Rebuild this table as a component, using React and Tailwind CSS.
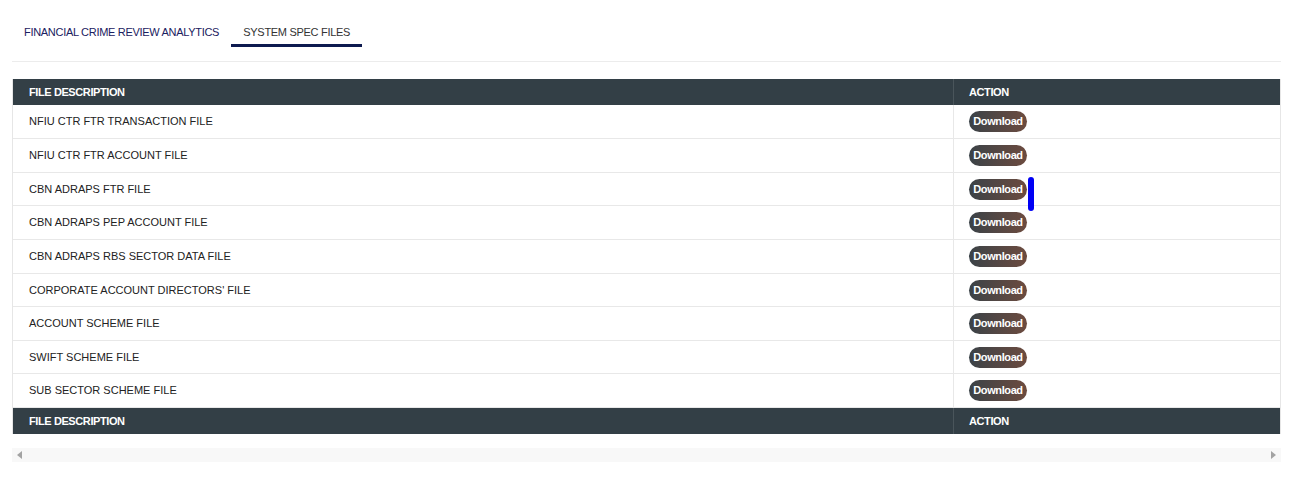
import React from 'react';

const files = [
  'NFIU CTR FTR TRANSACTION FILE',
  'NFIU CTR FTR ACCOUNT FILE',
  'CBN ADRAPS FTR FILE',
  'CBN ADRAPS PEP ACCOUNT FILE',
  'CBN ADRAPS RBS SECTOR DATA FILE',
  "CORPORATE ACCOUNT DIRECTORS' FILE",
  'ACCOUNT SCHEME FILE',
  'SWIFT SCHEME FILE',
  'SUB SECTOR SCHEME FILE',
];

// row heights alternate slightly, as in the rendered table
const rowH = ['h-[34px]', 'h-[34px]', 'h-[33px]', 'h-[34px]', 'h-[34px]', 'h-[33px]', 'h-[34px]', 'h-[33px]', 'h-[34px]'];

const HeaderRow = () => (
  <div className="flex h-[26px] bg-[#333f46] text-white text-[11px] font-bold tracking-[-0.4px]">
    <div className="w-[941px] pl-4 flex items-center border-r border-[#4a555b]">FILE DESCRIPTION</div>
    <div className="flex-1 pl-[15px] flex items-center">ACTION</div>
  </div>
);

export default function App() {
  return (
    <div className="w-[1293px] h-[479px] bg-white px-3 pt-[18px]" style={{ fontFamily: '"Liberation Sans", Arial, sans-serif' }}>
      {/* tabs */}
      <div className="flex border-b border-[#ececec] h-[44px]">
        <div className="px-3 pt-[6px] text-[11px] text-[#1a2060] tracking-[-0.3px]">FINANCIAL CRIME REVIEW ANALYTICS</div>
        <div className="px-3 pt-[6px] text-[11px] text-[#333] tracking-[-0.3px] w-[131px] text-center h-[29px] border-b-[3px] border-[#0d1a4f]">SYSTEM SPEC FILES</div>
      </div>

      {/* table */}
      <div className="mt-[17px] border-x border-[#e6e6e6]">
        <HeaderRow />
        {files.map((name, i) => (
          <div key={name} className={`flex ${rowH[i]} border-b border-[#e8e8e8] text-[11px] text-[#222]`}>
            <div className="w-[941px] pl-4 flex items-center border-r border-[#e8e8e8]">{name}</div>
            <div className="flex-1 pl-[15px] flex items-center relative">
              <button className="h-[21px] w-[58px] rounded-full text-white text-[11px] font-bold tracking-[-0.4px] bg-gradient-to-r from-[#3a4247] to-[#6c4b3f]">
                Download
              </button>
              {i === 2 && (
                <span className="absolute left-[74px] top-[4px] w-[6px] h-[34px] rounded-full bg-[#0000f5] z-10" />
              )}
            </div>
          </div>
        ))}
        <HeaderRow />
      </div>

      {/* horizontal scrollbar */}
      <div className="mt-[14px] h-[14px] bg-[#f8f8f8] flex items-center justify-between px-[5px]">
        <svg width="6" height="8" viewBox="0 0 6 8"><path d="M5 0 L0 4 L5 8 Z" fill="#a3a3a3" /></svg>
        <svg width="6" height="8" viewBox="0 0 6 8"><path d="M1 0 L6 4 L1 8 Z" fill="#a3a3a3" /></svg>
      </div>
    </div>
  );
}
